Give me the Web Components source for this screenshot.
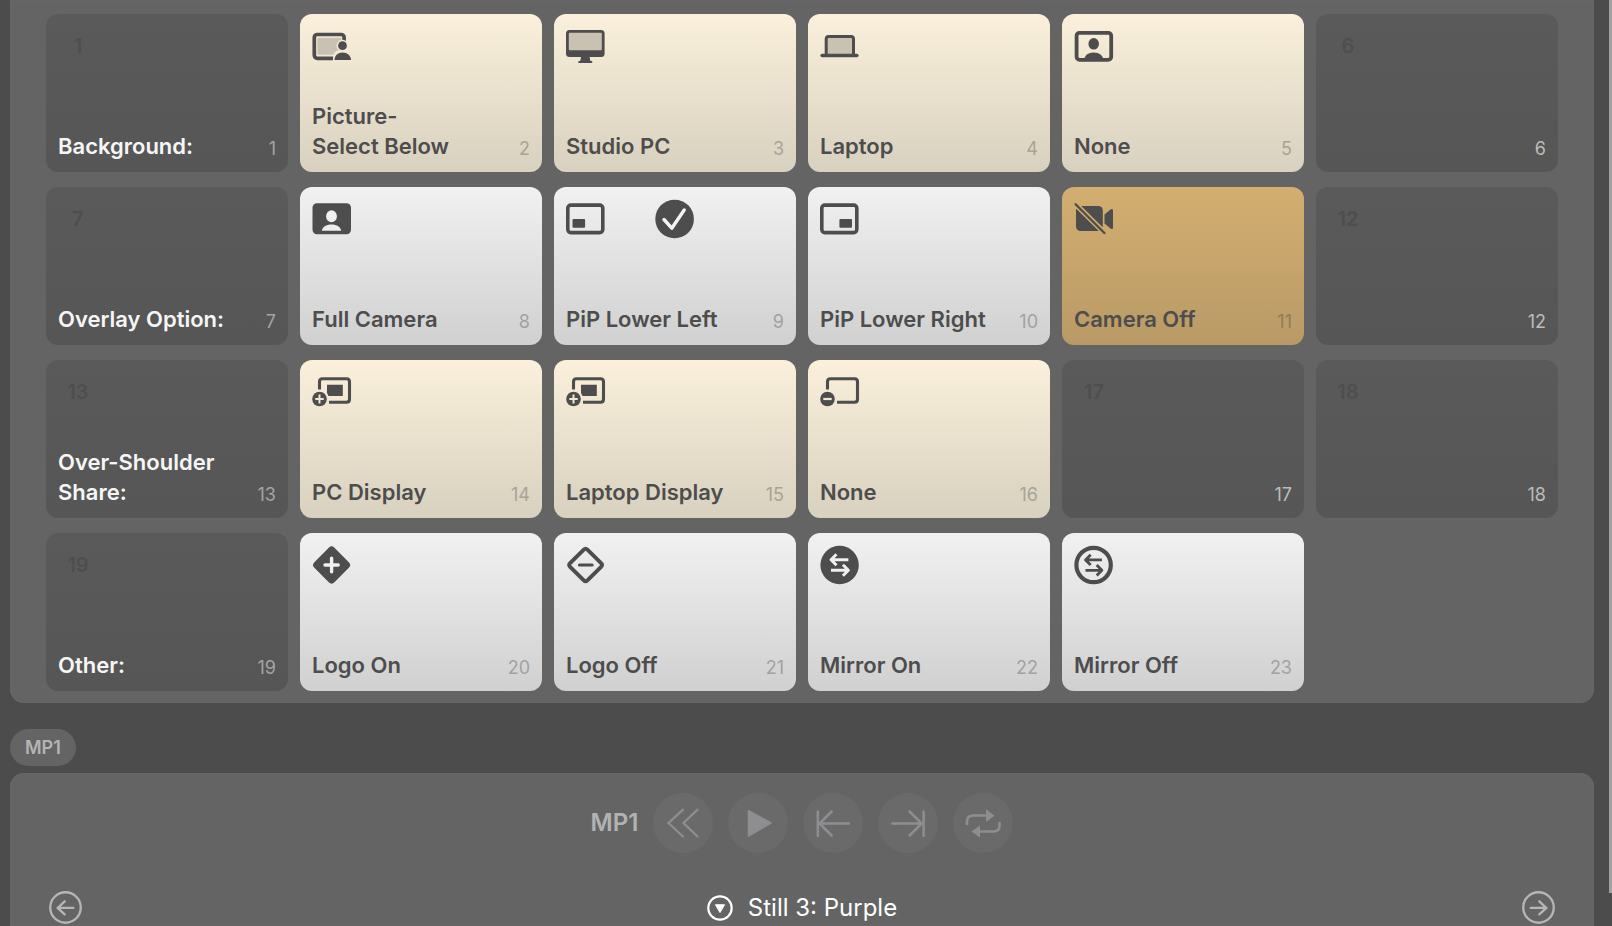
<!DOCTYPE html>
<html lang="en">
<head>
  <meta charset="utf-8">
  <meta name="viewport" content="width=device-width, initial-scale=1">
  <title>Macros</title>
  <style>
    body {
      margin: 0;
      height: 100vh;
      overflow: hidden;
      background: #4c4c4c;
      font-family: Inter, "Liberation Sans", sans-serif;
    }
  </style>
</head>
<body>
  <switcher-app>
    <control-panel class="macros">
      <macro-grid>
        <macro-button number="1" variant="heading">Background:</macro-button>
        <macro-button number="2" variant="cream" icon="picture">Picture-<br>Select Below</macro-button>
        <macro-button number="3" variant="cream" icon="desktop">Studio PC</macro-button>
        <macro-button number="4" variant="cream" icon="laptop">Laptop</macro-button>
        <macro-button number="5" variant="cream" icon="person-frame">None</macro-button>
        <macro-button number="6" variant="empty"></macro-button>

        <macro-button number="7" variant="heading">Overlay Option:</macro-button>
        <macro-button number="8" variant="silver" icon="person-fill">Full Camera</macro-button>
        <macro-button number="9" variant="silver" icon="pip-left" checked>PiP Lower Left</macro-button>
        <macro-button number="10" variant="silver" icon="pip-right">PiP Lower Right</macro-button>
        <macro-button number="11" variant="amber" icon="camera-off">Camera Off</macro-button>
        <macro-button number="12" variant="empty"></macro-button>

        <macro-button number="13" variant="heading">Over-Shoulder<br>Share:</macro-button>
        <macro-button number="14" variant="cream" icon="display-add">PC Display</macro-button>
        <macro-button number="15" variant="cream" icon="display-add">Laptop Display</macro-button>
        <macro-button number="16" variant="cream" icon="display-remove">None</macro-button>
        <macro-button number="17" variant="empty"></macro-button>
        <macro-button number="18" variant="empty"></macro-button>

        <macro-button number="19" variant="heading">Other:</macro-button>
        <macro-button number="20" variant="silver" icon="diamond-plus">Logo On</macro-button>
        <macro-button number="21" variant="silver" icon="diamond-minus">Logo Off</macro-button>
        <macro-button number="22" variant="silver" icon="swap-fill">Mirror On</macro-button>
        <macro-button number="23" variant="silver" icon="swap">Mirror Off</macro-button>
      </macro-grid>
    </control-panel>

    <section-tag>MP1</section-tag>

    <control-panel class="player">
      <media-player name="MP1">Still 3: Purple</media-player>
    </control-panel>
  </switcher-app>

  <script>
    // Every icon is drawn on a 40 x 40 box
    const ICONS = {
      'picture': `
        <mask id="cut">
          <rect width="40" height="40" fill="#fff"/>
          <circle cx="30.5" cy="19.7" r="5.9" fill="#000"/>
          <path d="M21 36V31a7 7 0 0 1 7-7h6v12z" fill="#000"/>
        </mask>
        <g mask="url(#cut)">
          <rect x="2.3" y="8.5" width="29.8" height="23.8" rx="3" fill="none" stroke="currentColor" stroke-width="3.7"/>
          <rect x="5.4" y="11.8" width="24" height="17" rx="1" fill="#c9c2b2"/>
        </g>
        <circle cx="30.5" cy="19.7" r="4.4" fill="currentColor"/>
        <path d="M22.500 34c0-4.500 3.500-7.500 8-7.500s8.500 3 8.500 7.500z" fill="currentColor"/>`,
      'desktop': `
        <rect x="0" y="4" width="38.600" height="27" rx="3.500" fill="currentColor"/>
        <rect x="2.800" y="6.800" width="33" height="17.400" rx="1" fill="#c9c2b2"/>
        <path d="M15 31h8.600l.8 4h1.200q.8 0 .8 1t-.8 1H13q-.8 0-.8-1t.8-1h1.200z" fill="currentColor"/>`,
      'laptop': `
        <path d="M6.200 28.500V13q0-2.500 2.500-2.500h22.300q2.500 0 2.500 2.500v15.500" fill="#c9c2b2" stroke="currentColor" stroke-width="3"/>
        <rect x="0.400" y="27.700" width="38.200" height="3.600" rx="1.700" fill="currentColor"/>`,
      'person-frame': `
        <rect x="2.600" y="6.800" width="34.600" height="27" rx="3" fill="none" stroke="currentColor" stroke-width="3.800"/>
        <ellipse cx="19.700" cy="17.800" rx="5.300" ry="5.800" fill="currentColor"/>
        <path d="M10 34c.5-4.500 4-7.600 9.700-7.600s9.300 3.100 9.800 7.600z" fill="currentColor"/>`,
      'person-fill': `
        <rect x="0.500" y="4.300" width="38.500" height="31" rx="4.500" fill="currentColor"/>
        <ellipse cx="19.500" cy="17.200" rx="5.400" ry="6" fill="#f0f0f0"/>
        <path d="M9.800 31.700c.8-3.800 4.200-6.200 9.700-6.200s8.900 2.400 9.700 6.200z" fill="#ececec"/>`,
      'pip-left': `
        <rect x="1.800" y="6.100" width="35" height="27.500" rx="3" fill="none" stroke="currentColor" stroke-width="3.600"/>
        <rect x="6.500" y="20" width="12.600" height="8.800" rx="1" fill="currentColor"/>`,
      'pip-right': `
        <rect x="1.800" y="6.100" width="35" height="27.500" rx="3" fill="none" stroke="currentColor" stroke-width="3.600"/>
        <rect x="19.400" y="20" width="12.600" height="8.800" rx="1" fill="currentColor"/>`,
      'camera-off': `
        <mask id="cut">
          <rect width="40" height="40" fill="#fff"/>
          <path d="M-2 1.700L34 37.300" stroke="#000" stroke-width="5.400"/>
        </mask>
        <g mask="url(#cut)" fill="currentColor">
          <rect x="2" y="7" width="26.800" height="25" rx="4.500"/>
          <path d="M30.500 15.500l6-5q2.500-1.500 2.500 1v17q0 2.500-2.500 1l-6-5z"/>
        </g>
        <path d="M1.600 5.300L30.400 34" stroke="currentColor" stroke-width="2.300" stroke-linecap="round"/>`,
      'display-add': `
        <path d="M7.500 17.500V9.700q0-3 3-3h24q3 0 3 3v17.600q0 3-3 3H17" fill="none" stroke="currentColor" stroke-width="3.100"/>
        <path d="M15 12.700h15.800V24H16.500l-1.500-3z" fill="currentColor"/>
        <circle cx="7.500" cy="27" r="7.300" fill="currentColor"/>
        <path d="M3.300 27h8.400M7.500 22.600v8.800" stroke="#efe8d5" stroke-width="2"/>`,
      'display-remove': `
        <path d="M7.500 17.500V9.700q0-3 3-3h24q3 0 3 3v17.600q0 3-3 3H17" fill="none" stroke="currentColor" stroke-width="3.100"/>
        <circle cx="7.500" cy="27" r="7.300" fill="currentColor"/>
        <path d="M3.300 27h8.400" stroke="#efe8d5" stroke-width="2.200"/>`,
      'diamond-plus': `
        <path d="M19.600 5.500L34 20 19.600 34.500 5.200 20z" fill="currentColor" stroke="currentColor" stroke-width="8" stroke-linejoin="round"/>
        <path d="M13 20h13.200M19.600 13.200v13.600" stroke="#f0f0f0" stroke-width="3.400" stroke-linecap="round"/>`,
      'diamond-minus': `
        <path d="M17.800 4.600q1.800-1.800 3.600 0l13.700 13.600q1.800 1.800 0 3.600L21.400 35.400q-1.800 1.800-3.600 0L4.100 21.800q-1.800-1.800 0-3.600z" fill="none" stroke="currentColor" stroke-width="3.900"/>
        <path d="M13.500 20h12.600" stroke="currentColor" stroke-width="3.200" stroke-linecap="round"/>`,
      'swap-fill': `
        <circle cx="19.600" cy="20" r="19.200" fill="currentColor"/>
        <path d="M28.400 14.700H11.500M16.500 9.200l-5.500 5.500 5.500 5.500M11 25.300h16.900M22.900 19.800l5.500 5.500-5.500 5.500" fill="none" stroke="#f0f0f0" stroke-width="2.900" stroke-linejoin="round"/>`,
      'swap': `
        <circle cx="19.600" cy="20" r="17.200" fill="none" stroke="currentColor" stroke-width="4.200"/>
        <path d="M27.900 14.900H12M16.700 9.800l-5.200 5.100 5.200 5.200M11.500 25.300h15.900M22.700 20.100l5.200 5.200-5.200 5.200" fill="none" stroke="currentColor" stroke-width="2.800" stroke-linejoin="round"/>`,
      'check': `
        <circle cx="19.600" cy="20" r="19.300" fill="currentColor"/>
        <path d="M9 20.500l7.800 8.700L29.200 11" fill="none" stroke="#f4f4f4" stroke-width="3.400" stroke-linecap="round" stroke-linejoin="round"/>`,
      'rewind': `<path d="M20 6.700L5.500 20 20 33.500M34.500 6.700L20.500 20l14 13.500" fill="none" stroke="currentColor" stroke-width="2.300" stroke-linecap="round"/>`,
      'play': `<path d="M10.500 7.700L33 20 10.500 33z" fill="currentColor" stroke="currentColor" stroke-width="1.500" stroke-linejoin="round"/>`,
      'to-start': `<path d="M4.800 8.500v24.500M36 20.500H6M18.600 8.500L6.500 20.500l12.100 12" fill="none" stroke="currentColor" stroke-width="2.500" stroke-linecap="round"/>`,
      'to-end': `<path d="M35.600 8.500v24.500M4.300 20.500H34M21.600 8.500l12.100 12-12.100 12" fill="none" stroke="currentColor" stroke-width="2.500" stroke-linecap="round"/>`,
      'repeat': `
        <path d="M4 21v-2.500q0-6 6-6h14M36.500 20v2.500q0 6-6 6H17" fill="none" stroke="currentColor" stroke-width="2.600" stroke-linecap="round"/>
        <path d="M23 6l8.500 6.700-8.500 6zM17 22.500l-8.500 6 8.500 6z" fill="currentColor"/>`,
      'arrow-left': `
        <circle cx="20" cy="20" r="18.500" fill="none" stroke="currentColor" stroke-width="2.800"/>
        <path d="M29.500 20.500H11M19 12.500l-8.500 8 8.500 7.800" fill="none" stroke="currentColor" stroke-width="2.800" stroke-linecap="round"/>`,
      'arrow-right': `
        <circle cx="20" cy="20" r="18.500" fill="none" stroke="currentColor" stroke-width="2.800"/>
        <path d="M10.500 20.500H29M21 12.500l8.500 8-8.500 7.800" fill="none" stroke="currentColor" stroke-width="2.800" stroke-linecap="round"/>`,
      'dropdown': `
        <circle cx="20" cy="20" r="18" fill="none" stroke="currentColor" stroke-width="3.400"/>
        <path d="M13 15h14l-7 12z" fill="currentColor" stroke="currentColor" stroke-width="1.500" stroke-linejoin="round"/>`
    };

    class SwitcherApp extends HTMLElement {
      connectedCallback() {
        this.attachShadow({ mode: 'open' });
        this.shadowRoot.innerHTML = `
          <style>
            :host {
              display: flex;
              flex-direction: column;
              align-items: stretch;
              box-sizing: border-box;
              min-height: 100vh;
              padding: 0 18px 0 10px;
              position: relative;
            }

            ::slotted(section-tag) {
              align-self: flex-start;
              margin: 26px 0 7px;
            }

            ::slotted(.macros) {
              --panel-radius: 0 0 14px 14px;
              --panel-padding: 14px 36px 12px;
            }

            ::slotted(.player) {
              --panel-radius: 14px 14px 0 0;
              --panel-padding: 20px 39px 0;
              flex: 1;
            }

            .scroll-thumb {
              position: absolute;
              top: 0;
              right: 0;
              bottom: 33px;
              width: 3px;
              background: #a2a2a2;
            }
          </style>
          <slot></slot>
          <div class="scroll-thumb"></div>
        `;
      }
    }

    class ControlPanel extends HTMLElement {
      connectedCallback() {
        this.attachShadow({ mode: 'open' });
        this.shadowRoot.innerHTML = `
          <style>
            :host {
              display: block;
              padding: var(--panel-padding, 20px);
              border-radius: var(--panel-radius, 14px);
              background: #646464;
              box-shadow: inset 0 0 3px #6c6c6c;
            }
          </style>
          <slot></slot>
        `;
      }
    }

    class MacroGrid extends HTMLElement {
      connectedCallback() {
        this.attachShadow({ mode: 'open' });
        this.shadowRoot.innerHTML = `
          <style>
            :host {
              display: grid;
              grid-template-columns: repeat(6, minmax(0, 1fr));
              gap: 15px 12px;
            }
          </style>
          <slot></slot>
        `;
      }
    }

    class SwitcherIcon extends HTMLElement {
      connectedCallback() {
        this.attachShadow({ mode: 'open' });
        this.shadowRoot.innerHTML = `
          <style>
            :host {
              display: block;
              flex: none;
              width: var(--icon-size, 40px);
              height: var(--icon-size, 40px);
            }

            svg {
              display: block;
              width: 100%;
              height: 100%;
            }
          </style>
          <svg viewBox="0 0 40 40" aria-hidden="true">${ICONS[this.getAttribute('name')]}</svg>
        `;
      }
    }

    class MacroButton extends HTMLElement {
      connectedCallback() {
        const number = this.getAttribute('number');
        const icon = this.getAttribute('icon');

        this.attachShadow({ mode: 'open' });
        this.shadowRoot.innerHTML = `
          <style>
            :host {
              display: block;
              --top: #5a5a5a;
              --bottom: #565656;
              --ink: #f6f6f6;
              --number: #a4a4a4;
            }

            :host([variant="empty"]) {
              --number: #bcbcbc;
            }

            :host([variant="cream"]) {
              --top: #faf0db;
              --bottom: #d8d1bf;
              --ink: #4d4d4d;
              --number: #a8a394;
            }

            :host([variant="silver"]) {
              --top: #f1f1f1;
              --bottom: #d0d0d0;
              --ink: #4d4d4d;
              --number: #a2a2a2;
            }

            :host([variant="amber"]) {
              --top: #d3ae70;
              --bottom: #b99a66;
              --ink: #4d4d4d;
              --number: #917c59;
            }

            button {
              display: flex;
              flex-direction: column;
              justify-content: space-between;
              box-sizing: border-box;
              width: 100%;
              min-height: 158px;
              margin: 0;
              padding: 12px 12px 11px;
              border: 0;
              border-radius: 12px;
              background: linear-gradient(var(--top), var(--bottom));
              color: var(--ink);
              font: inherit;
              text-align: left;
              cursor: pointer;
            }

            .head {
              display: grid;
              grid-template-columns: 1fr auto 1fr;
            }

            .slot-number {
              width: 40px;
              font-size: 20px;
              font-weight: 600;
              line-height: 40px;
              text-align: center;
              color: #4e4e4e;
            }

            .foot {
              display: flex;
              justify-content: space-between;
              align-items: flex-end;
            }

            .label {
              font-size: 22px;
              font-weight: 600;
              line-height: 30px;
              white-space: nowrap;
            }

            .number {
              font-size: 18px;
              font-weight: 400;
              line-height: 24px;
              color: var(--number);
            }
          </style>
          <button type="button">
            <span class="head">
              ${icon ? `<switcher-icon name="${icon}"></switcher-icon>` : `<span class="slot-number">${number}</span>`}
              ${this.hasAttribute('checked') ? '<switcher-icon name="check"></switcher-icon>' : ''}
            </span>
            <span class="foot">
              <span class="label"><slot></slot></span>
              <span class="number">${number}</span>
            </span>
          </button>
        `;
      }
    }

    class SectionTag extends HTMLElement {
      connectedCallback() {
        this.attachShadow({ mode: 'open' });
        this.shadowRoot.innerHTML = `
          <style>
            :host {
              display: block;
              padding: 0 15px;
              border-radius: 19px;
              background: #646464;
              color: #b4b4b4;
              font-size: 18px;
              font-weight: 600;
              line-height: 37px;
            }
          </style>
          <slot></slot>
        `;
      }
    }

    class MediaPlayer extends HTMLElement {
      connectedCallback() {
        this.attachShadow({ mode: 'open' });
        this.shadowRoot.innerHTML = `
          <style>
            :host {
              display: flex;
              flex-direction: column;
              gap: 38px;
            }

            .transport {
              display: flex;
              justify-content: center;
              align-items: center;
              gap: 15px;
            }

            .name {
              color: #b2b2b2;
              font-size: 24px;
              font-weight: 600;
              line-height: 30px;
            }

            button {
              display: flex;
              justify-content: center;
              align-items: center;
              margin: 0;
              padding: 0;
              border: 0;
              background: none;
              color: #b6b6b6;
              font: inherit;
              cursor: pointer;
            }

            .transport button {
              width: 60px;
              height: 60px;
              border-radius: 50%;
              background: #6a6a6a;
              color: #8e8e91;
            }

            .source {
              display: flex;
              justify-content: space-between;
              align-items: center;
              --icon-size: 33px;
            }

            .source .current {
              gap: 15px;
              color: #fff;
              font-size: 24px;
              line-height: 30px;
              --icon-size: 26px;
            }
          </style>
          <div class="transport">
            <span class="name">${this.getAttribute('name')}</span>
            <button type="button" aria-label="Rewind"><switcher-icon name="rewind"></switcher-icon></button>
            <button type="button" aria-label="Play"><switcher-icon name="play"></switcher-icon></button>
            <button type="button" aria-label="Go to start"><switcher-icon name="to-start"></switcher-icon></button>
            <button type="button" aria-label="Go to end"><switcher-icon name="to-end"></switcher-icon></button>
            <button type="button" aria-label="Repeat"><switcher-icon name="repeat"></switcher-icon></button>
          </div>
          <div class="source">
            <button type="button" aria-label="Previous"><switcher-icon name="arrow-left"></switcher-icon></button>
            <button type="button" class="current"><switcher-icon name="dropdown"></switcher-icon><slot></slot></button>
            <button type="button" aria-label="Next"><switcher-icon name="arrow-right"></switcher-icon></button>
          </div>
        `;
      }
    }

    customElements.define('switcher-icon', SwitcherIcon);
    customElements.define('switcher-app', SwitcherApp);
    customElements.define('control-panel', ControlPanel);
    customElements.define('macro-grid', MacroGrid);
    customElements.define('macro-button', MacroButton);
    customElements.define('section-tag', SectionTag);
    customElements.define('media-player', MediaPlayer);
  </script>
</body>
</html>
